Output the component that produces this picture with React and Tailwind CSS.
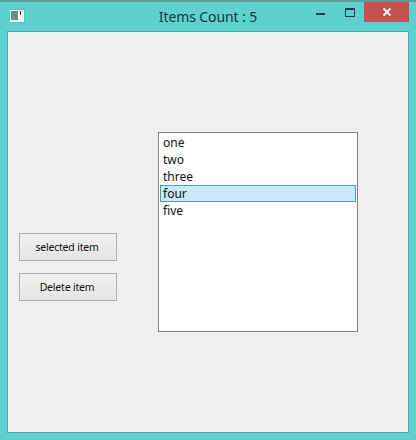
const items = ["one", "two", "three", "four", "five"];

function QtButton({ label }) {
  return (
    <button className="h-[28px] w-[98px] border border-[#adadad] bg-gradient-to-b from-[#f0f0f0] to-[#e5e5e5] pr-[2px] pt-[2px] text-[10.5px] tracking-[-0.2px] text-[#111]">
      {label}
    </button>
  );
}

export default function App() {
  return (
    <div className="flex h-[440px] w-[416px] flex-col bg-[#5fd0d0] font-['Noto_Sans',sans-serif]">
      <div className="h-[2px] bg-[#5f9a9c]" />
      <div className="grid h-[29px] grid-cols-[1fr_auto_1fr] items-start">
        <div className="ml-[10px] mt-[8px] flex h-[12px] w-[14px] items-start gap-[2px] border border-[#eef6f6] bg-[#eef6f6] shadow-[0_0_1px_#44797a]">
          <div className="h-[9px] w-[7px] bg-[#5f8f86]" />
          <div className="h-[4px] w-[1px] bg-[#222]" />
        </div>
        <div className="pt-[5px] text-center text-[14px] leading-[20px] tracking-[-0.1px] text-[#12393e]">
          Items Count : 5
        </div>
        <div className="flex items-start justify-end">
          <div className="mt-[11px] h-[2px] w-[9px] bg-[#0d3f4c]" />
          <div className="ml-[20px] mt-[6px] h-[9px] w-[10px] border border-t-[2px] border-[#0d3f4c]" />
          <div className="ml-[9px] mr-[7px] flex h-[20px] w-[45px] items-center justify-center bg-[#c75050]">
            <svg width="10" height="10" viewBox="0 0 10 10">
              <path d="M1.5 1.5l7 7M8.5 1.5l-7 7" stroke="#fff" strokeWidth="1.8" fill="none" />
            </svg>
          </div>
        </div>
      </div>
      <div className="mx-[7px] mb-[7px] flex flex-1 items-center border border-[#4aa5a8] bg-[#efefef] pl-[11px]">
        <div className="flex h-[200px] w-[98px] flex-col justify-end gap-[12px] pb-[31px]">
          <QtButton label="selected item" />
          <QtButton label="Delete item" />
        </div>
        <ul className="ml-[41px] h-[200px] w-[200px] border border-[#828282] bg-white px-[1px] pt-[1px] text-[12px] leading-[18px] text-[#111]">
          {items.map((item) => (
            <li
              key={item}
              className={
                item === "four"
                  ? "h-[17px] border border-[#4c9cb8] bg-[#c9e8f8] pl-[2px] leading-[15px]"
                  : "h-[17px] pl-[3px]"
              }
            >
              {item}
            </li>
          ))}
        </ul>
      </div>
    </div>
  );
}
